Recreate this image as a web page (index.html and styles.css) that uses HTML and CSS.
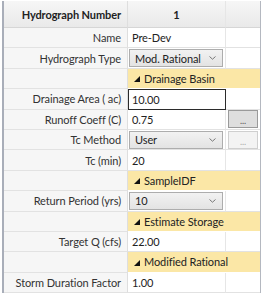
FILE: index.html
```html
<!DOCTYPE html>
<html lang="en">
<head>
    <meta charset="UTF-8">
    <title>Hydrograph</title>
    <link rel="stylesheet" href="styles.css">
</head>
<body>
    <div class="grid">
        <div class="row head">
            <div class="lbl">Hydrograph Number</div>
            <div class="val">1</div>
            <div class="ext"></div>
        </div>
        <div class="row">
            <div class="lbl">Name</div>
            <div class="val">Pre-Dev</div>
            <div class="ext"></div>
        </div>
        <div class="row">
            <div class="lbl">Hydrograph Type</div>
            <div class="val"><div class="combo">Mod. Rational<svg class="chev" width="7" height="4" viewBox="0 0 7 4"><path d="M0.5 0.5 L3.5 3.2 L6.5 0.5" fill="none" stroke="#777" stroke-width="1"/></svg></div></div>
            <div class="ext"></div>
        </div>
        <div class="row section">
            <div class="lbl"></div>
            <div class="sec"><svg class="tri" width="6" height="6" viewBox="0 0 6 6"><polygon points="6,0 6,6 0,6" fill="#111"/></svg>Drainage Basin</div>
        </div>
        <div class="row">
            <div class="lbl">Drainage Area ( ac)</div>
            <div class="val"><div class="edit">10.00</div></div>
            <div class="ext"></div>
        </div>
        <div class="row">
            <div class="lbl">Runoff Coeff (C)</div>
            <div class="val">0.75</div>
            <div class="ext"><div class="dots">...</div></div>
        </div>
        <div class="row">
            <div class="lbl">Tc Method</div>
            <div class="val"><div class="combo">User<svg class="chev" width="7" height="4" viewBox="0 0 7 4"><path d="M0.5 0.5 L3.5 3.2 L6.5 0.5" fill="none" stroke="#777" stroke-width="1"/></svg></div></div>
            <div class="ext"><div class="dots off">...</div></div>
        </div>
        <div class="row">
            <div class="lbl">Tc (min)</div>
            <div class="val">20</div>
            <div class="ext"></div>
        </div>
        <div class="row section">
            <div class="lbl"></div>
            <div class="sec"><svg class="tri" width="6" height="6" viewBox="0 0 6 6"><polygon points="6,0 6,6 0,6" fill="#111"/></svg>SampleIDF</div>
        </div>
        <div class="row">
            <div class="lbl">Return Period (yrs)</div>
            <div class="val"><div class="combo">10<svg class="chev" width="7" height="4" viewBox="0 0 7 4"><path d="M0.5 0.5 L3.5 3.2 L6.5 0.5" fill="none" stroke="#777" stroke-width="1"/></svg></div></div>
            <div class="ext"></div>
        </div>
        <div class="row section">
            <div class="lbl"></div>
            <div class="sec"><svg class="tri" width="6" height="6" viewBox="0 0 6 6"><polygon points="6,0 6,6 0,6" fill="#111"/></svg>Estimate Storage</div>
        </div>
        <div class="row">
            <div class="lbl">Target Q (cfs)</div>
            <div class="val">22.00</div>
            <div class="ext"></div>
        </div>
        <div class="row section">
            <div class="lbl"></div>
            <div class="sec"><svg class="tri" width="6" height="6" viewBox="0 0 6 6"><polygon points="6,0 6,6 0,6" fill="#111"/></svg>Modified Rational</div>
        </div>
        <div class="row">
            <div class="lbl">Storm Duration Factor</div>
            <div class="val">1.00</div>
            <div class="ext"></div>
        </div>
    </div>
</body>
</html>
```

FILE: styles.css
```css
body {
    margin: 0;
    background-color: #fff;
    font-family: Lato, "Open Sans", sans-serif;
    font-size: 11px;
    letter-spacing: -0.1px;
    color: #222;
}
.grid {
    margin: 1px 0 0 2px;
    width: 256px;
    border-left: 2px solid #a9aeb9;
    border-right: 1px solid #b4b8c0;
}
.row {
    display: grid;
    grid-template-columns: 124px 98px 34px;
    height: 20.4px;
}
.row > div {
    border-bottom: 1px solid #e2e2e2;
    display: flex;
    align-items: center;
    min-width: 0;
    white-space: nowrap;
}
.lbl {
    justify-content: flex-end;
    padding-right: 6px;
    background-color: #f6f6f6;
    border-right: 1px solid #dedede;
    color: #333;
}
.val {
    padding-left: 4px;
    border-right: 1px solid #e6e6e6;
}
.ext {
    justify-content: center;
}
.head {
    height: 27px;
}
.head > div {
    background: linear-gradient(#f6f6f6, #e9e9e9);
    border-bottom: 1px solid #d6d6d6;
}
.head .lbl {
    font-weight: bold;
    color: #222;
}
.head .val {
    justify-content: center;
    padding-left: 0;
    font-weight: bold;
}
.section .sec {
    grid-column: 2 / 4;
    background-color: #fbe7a6;
    padding-left: 6px;
    border-bottom: 1px solid #fff;
}
.tri {
    margin-right: 4px;
    margin-top: 2px;
}
.combo {
    flex: 1;
    display: flex;
    align-items: center;
    justify-content: space-between;
    height: 16px;
    margin-left: -3px;
    margin-right: 2px;
    padding: 0 6px 0 5px;
    border: 1px solid #adadad;
    background: linear-gradient(#f2f2f2, #e3e3e3);
}
.edit {
    flex: 1;
    align-self: stretch;
    display: flex;
    align-items: center;
    margin: 0 -1px -1px -4px;
    padding-left: 3px;
    border: 1px solid #2b2b2b;
    background-color: #fff;
}
.dots {
    width: 28px;
    height: 16px;
    display: flex;
    justify-content: center;
    align-items: flex-end;
    line-height: 12px;
    font-size: 9px;
    color: #555;
    border: 1px solid #9a9a9a;
    background-color: #dedede;
}
.dots.off {
    color: #aaa;
    border-color: #cfcfcf;
    background-color: #f3f3f3;
}
```
